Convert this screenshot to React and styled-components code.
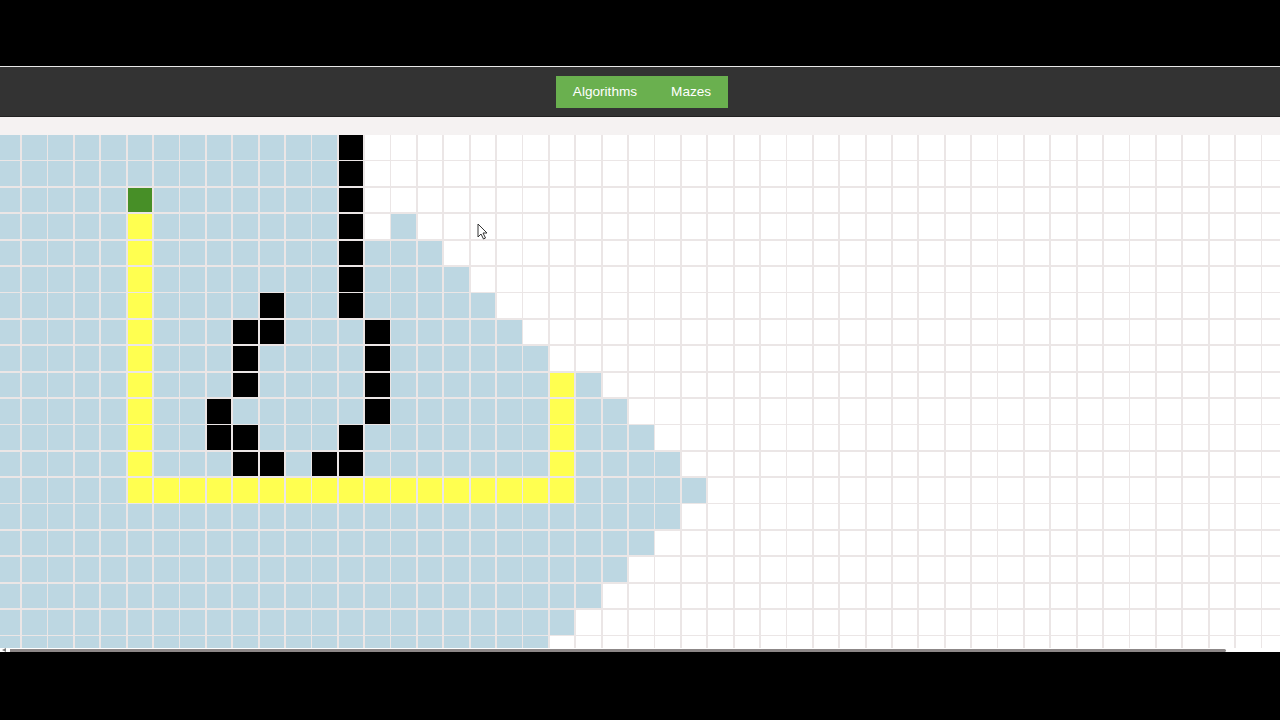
import React from 'react';
import styled, { createGlobalStyle } from 'styled-components';

const GlobalStyle = createGlobalStyle`
  html, body {
    margin: 0;
    padding: 0;
    background: #000;
    overflow: hidden;
  }
  body {
    font-family: 'Liberation Sans', Arial, sans-serif;
  }
`;

const Page = styled.div`
  width: 1280px;
  height: 720px;
  display: flex;
  flex-direction: column;
  background: #000;
`;

const Letterbox = styled.div`
  height: ${(p) => p.h}px;
  flex-shrink: 0;
  background: #000;
`;

const TopRule = styled.div`
  height: 1px;
  background: #e8e8e8;
`;

const NavBar = styled.nav`
  height: 50px;
  background: #333333;
  border-bottom: 1px solid #222;
  box-sizing: border-box;
  display: flex;
  align-items: center;
  justify-content: center;
  padding-left: 4px;
`;

const ButtonGroup = styled.div`
  display: flex;
  height: 32px;
  background: #6ab04f;
`;

const NavButton = styled.button`
  border: none;
  background: transparent;
  color: #fff;
  font-family: 'Liberation Sans', Arial, sans-serif;
  font-size: 13.6px;
  padding: 0 ${(p) => p.pad}px;
  cursor: pointer;
`;

const Strip = styled.div`
  height: 18px;
  background: #f5f2f2;
`;

const Viewport = styled.div`
  position: relative;
  height: 513px;
  overflow: hidden;
  background: #ebe6e6;
`;

const Grid = styled.div`
  display: grid;
  grid-template-columns: repeat(49, 24.6px);
  grid-auto-rows: 24.6px;
  gap: 1.8px;
  margin-left: -4.4px;
  background: #ebe6e6;
`;

const colors = {
  empty: '#ffffff',
  visited: '#bdd7e2',
  wall: '#000000',
  path: '#ffff50',
  start: '#478f27',
};

const Cell = styled.div`
  background: ${(p) => colors[p.kind]};
`;

const Cursor = styled.svg`
  position: absolute;
  left: 477px;
  top: 88px;
  width: 11px;
  height: 17px;
`;

const Scrollbar = styled.div`
  height: 4px;
  background: #fff;
  display: flex;
  align-items: center;
`;

const ScrollArrow = styled.div`
  width: 10px;
  height: 4px;
  position: relative;
  &::after {
    content: '';
    position: absolute;
    left: 2px;
    top: 0;
    border-top: 2px solid transparent;
    border-bottom: 2px solid transparent;
    border-right: 4px solid #777;
  }
`;

const Thumb = styled.div`
  width: 1216px;
  height: 3px;
  border-radius: 0 2px 2px 0;
  background: #8c8787;
`;

const ROWS = 20;
const COLS = 49; // first column is col -1 (partial)

const wallList = [
  [0, 12], [1, 12], [2, 12], [3, 12], [4, 12], [5, 12], [6, 12],
  [6, 9], [7, 8], [7, 9], [8, 8], [9, 8],
  [10, 7], [11, 7], [11, 8],
  [12, 8], [12, 9], [12, 11], [12, 12], [11, 12],
  [7, 13], [8, 13], [9, 13], [10, 13],
];
const walls = new Set(wallList.map(([r, c]) => `${r},${c}`));

// furthest visited column per row
const reach = [11, 11, 11, 14, 15, 16, 17, 18, 19, 21, 22, 23, 24, 25, 24, 23, 22, 21, 20, 19];

function cellKind(r, c) {
  if (walls.has(`${r},${c}`)) return 'wall';
  if (r === 2 && c === 4) return 'start';
  if (c === 4 && r >= 3 && r <= 13) return 'path';
  if (r === 13 && c >= 4 && c <= 20) return 'path';
  if (c === 20 && r >= 9 && r <= 13) return 'path';
  if (r === 3 && c === 13) return 'empty';
  if (c <= reach[r]) return 'visited';
  return 'empty';
}

const cells = [];
for (let r = 0; r < ROWS; r++) {
  for (let i = 0; i < COLS; i++) {
    const c = i - 1;
    cells.push({ key: `${r}-${c}`, kind: cellKind(r, c) });
  }
}

export default function App() {
  return (
    <Page>
      <GlobalStyle />
      <Letterbox h={66} />
      <TopRule />
      <NavBar>
        <ButtonGroup>
          <NavButton pad={17}>Algorithms</NavButton>
          <NavButton pad={17}>Mazes</NavButton>
        </ButtonGroup>
      </NavBar>
      <Strip />
      <Viewport>
        <Grid>
          {cells.map((cell) => (
            <Cell key={cell.key} kind={cell.kind} />
          ))}
        </Grid>
        <Cursor viewBox="0 0 11 17">
          <path d="M1 1 L1 14 L4 11 L6.5 16 L8.5 15 L6 10 L10 10 Z" fill="#fff" stroke="#333" strokeWidth="1" strokeLinejoin="round" />
        </Cursor>
      </Viewport>
      <Scrollbar>
        <ScrollArrow />
        <Thumb />
      </Scrollbar>
      <Letterbox h={68} />
    </Page>
  );
}
